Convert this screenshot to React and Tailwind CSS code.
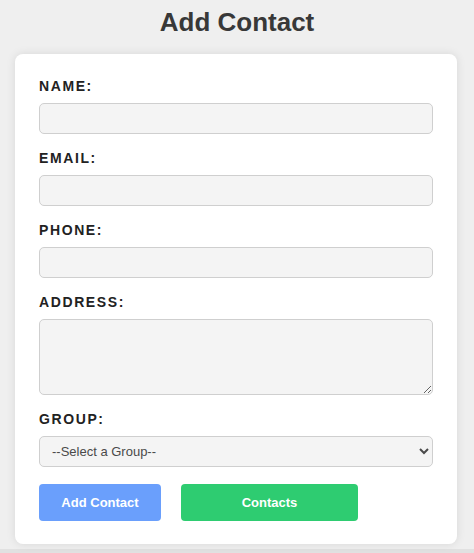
import React from "react";

const font = { fontFamily: '"Liberation Sans", Arial, sans-serif' };

function Field({ label, children }) {
  return (
    <div className="mb-4">
      <label className="block text-[14px] leading-[17px] font-bold tracking-[1.6px] text-[#222] mb-2">
        {label}
      </label>
      {children}
    </div>
  );
}

export default function App() {
  const inputCls =
    "block w-full h-[31px] rounded-[5px] border border-[#cfcfcf] bg-[#f4f4f4] px-2 text-[14px] text-[#333] outline-none";
  return (
    <div style={font} className="w-[474px] h-[553px] bg-[#e1e1e1] flex flex-col">
      <div className="h-[549px] bg-[#efefef] pt-[7px] px-[15px]">
        <h1 className="text-center text-[26px] leading-[30px] font-bold text-[#383838] mb-[17px]">
          Add Contact
        </h1>
        <div className="w-[442px] rounded-[8px] bg-white px-6 pt-6 pb-[23px] shadow-[0_0_10px_rgba(0,0,0,0.1)]">
          <Field label="NAME:">
            <input type="text" className={inputCls} />
          </Field>
          <Field label="EMAIL:">
            <input type="email" className={inputCls} />
          </Field>
          <Field label="PHONE:">
            <input type="tel" className={inputCls} />
          </Field>
          <Field label="ADDRESS:">
            <textarea className="block w-full h-[76px] rounded-[5px] border border-[#cfcfcf] bg-[#f4f4f4] px-2 py-1 text-[14px] outline-none" />
          </Field>
          <div className="mb-[17px]">
            <label className="block text-[14px] leading-[17px] font-bold tracking-[1.6px] text-[#222] mb-2">
              GROUP:
            </label>
            <select
              style={font}
              defaultValue=""
              className="block w-full h-[31px] rounded-[5px] border border-[#cfcfcf] bg-[#f4f4f4] pl-[8px] pr-[4px] text-[13px] text-[#4a4a4a] outline-none"
            >
              <option value="">--Select a Group--</option>
            </select>
          </div>
          <div className="flex gap-5">
            <button className="w-[122px] h-[37px] rounded-[4px] bg-[#6a9ffc] text-white text-[13px] font-bold">
              Add Contact
            </button>
            <button className="w-[177px] h-[37px] rounded-[4px] bg-[#2ecc71] text-white text-[13px] font-bold">
              Contacts
            </button>
          </div>
        </div>
      </div>
    </div>
  );
}
